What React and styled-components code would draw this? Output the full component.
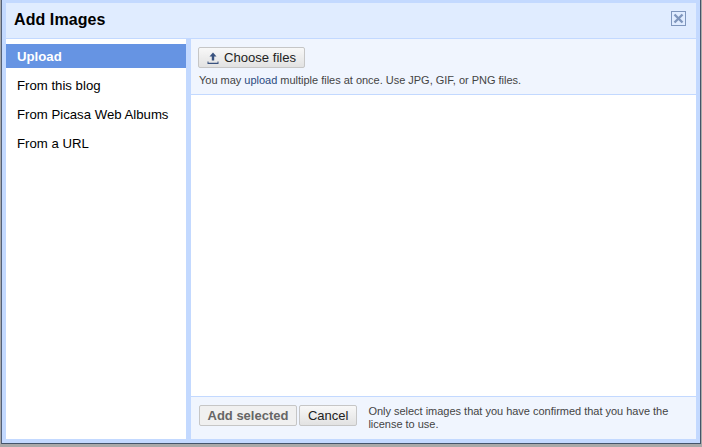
import React from "react";
import styled, { createGlobalStyle } from "styled-components";

const Global = createGlobalStyle`
  html, body { margin: 0; padding: 0; width: 702px; height: 447px; overflow: hidden; background: #a8a8a8; }
  * { box-sizing: border-box; }
`;

const Page = styled.div`
  width: 702px;
  height: 447px;
  background: #a9a9a9;
  padding: 0 1px 3px 1px;
  font-family: "Liberation Sans", Arial, sans-serif;
`;

const Dialog = styled.div`
  width: 700px;
  height: 444px;
  display: flex;
  flex-direction: column;
  background: #c3d9ff;
  padding: 3px 4px 4px 4px;
  border-left: 1px solid #526079;
  border-bottom: 1px solid #44546a;
  border-right: 1px solid #44546a;
`;

const Header = styled.div`
  height: 35px;
  flex: none;
  background: #e0ecff;
  display: flex;
  align-items: center;
  justify-content: space-between;
  padding: 0 10px 2px 8px;
`;

const Title = styled.h1`
  margin: 0;
  font-size: 16px;
  font-weight: bold;
  letter-spacing: 0.08px;
  color: #000;
`;

const Close = styled.button`
  width: 15px;
  height: 15px;
  margin-bottom: 2px;
  padding: 0;
  border: 1px solid #7f96bd;
  outline: 0.4px solid #7f96bd;
  outline-offset: -1px;
  background: transparent;
  display: flex;
`;

const Body = styled.div`
  flex: 1;
  min-height: 0;
  display: flex;
  gap: 5px;
  margin-top: 1px;
`;

const Side = styled.nav`
  width: 180px;
  flex: none;
  background: #fff;
  padding-top: 5px;
`;

const Item = styled.div`
  height: 24px;
  margin-bottom: 5px;
  padding-left: 11px;
  display: flex;
  align-items: center;
  font-size: 13.2px;
  color: ${p => (p.$active ? "#fff" : "#000")};
  font-weight: ${p => (p.$active ? "bold" : "normal")};
  background: ${p => (p.$active ? "#6694e3" : "transparent")};
`;

const Main = styled.div`
  flex: 1;
  display: flex;
  flex-direction: column;
  background: #fff;
`;

const Top = styled.div`
  height: 56px;
  flex: none;
  background: #f0f5fe;
  border-bottom: 1px solid #c3d9ff;
  padding: 8px 0 0 7px;
`;

const Btn = styled.button`
  height: 21px;
  padding: 0 ${p => p.$pad ?? 8}px;
  border: 1px solid #c6c6c6;
  border-radius: 2px;
  background: ${p => (p.$disabled ? "#f0f0f0" : "linear-gradient(#f8f8f8, #e2e2e2)")};
  color: ${p => (p.$disabled ? "#666" : "#222")};
  font: ${p => (p.$bold ? "bold" : "normal")} ${p => p.$size || 13}px "Liberation Sans", Arial, sans-serif;
  display: inline-flex;
  align-items: center;
  gap: 5px;
  white-space: nowrap;
`;

const Hint = styled.div`
  margin: 6px 0 0 1px;
  font-size: 11px;
  line-height: 13px;
  letter-spacing: -0.015px;
  color: #444;
`;

const LinkText = styled.span`
  color: #2a4a80;
`;

const Content = styled.div`
  flex: 1;
`;

const Foot = styled.div`
  height: 43px;
  flex: none;
  background: #f0f5fe;
  border-top: 1px solid #c3d9ff;
  display: flex;
  align-items: flex-start;
  padding: 8px 0 0 8px;
  gap: 2px;
`;

const Note = styled.div`
  width: 320px;
  margin-left: 9px;
  font-size: 11px;
  line-height: 13px;
  letter-spacing: -0.015px;
  color: #444;
`;

export default function App() {
  return (
    <Page>
      <Global />
      <Dialog>
        <Header>
          <Title>Add Images</Title>
          <Close aria-label="Close">
            <svg width="13" height="13" viewBox="0 0 13 13">
              <path d="M2.5 2.5 L10.5 10.5 M10.5 2.5 L2.5 10.5" stroke="#7f96bd" strokeWidth="2.4" />
            </svg>
          </Close>
        </Header>
        <Body>
          <Side>
            <Item $active>Upload</Item>
            <Item>From this blog</Item>
            <Item>From Picasa Web Albums</Item>
            <Item>From a URL</Item>
          </Side>
          <Main>
            <Top>
              <Btn $size={13.1} $pad={8}>
                <svg width="12" height="12" viewBox="0 0 12 12">
                  <path d="M6 0.5 L9.5 4.5 H7.2 V8.5 H4.8 V4.5 H2.5 Z M0.5 9.5 H1.5 V10.8 H10.5 V9.5 H11.5 V12 H0.5 Z" fill="#39527f" />
                </svg>
                Choose files
              </Btn>
              <Hint>You may <LinkText>upload</LinkText> multiple files at once. Use JPG, GIF, or PNG files.</Hint>
            </Top>
            <Content />
            <Foot>
              <Btn $disabled $bold $pad={7.5}>Add selected</Btn>
              <Btn>Cancel</Btn>
              <Note>Only select images that you have confirmed that you have the license to use.</Note>
            </Foot>
          </Main>
        </Body>
      </Dialog>
    </Page>
  );
}
